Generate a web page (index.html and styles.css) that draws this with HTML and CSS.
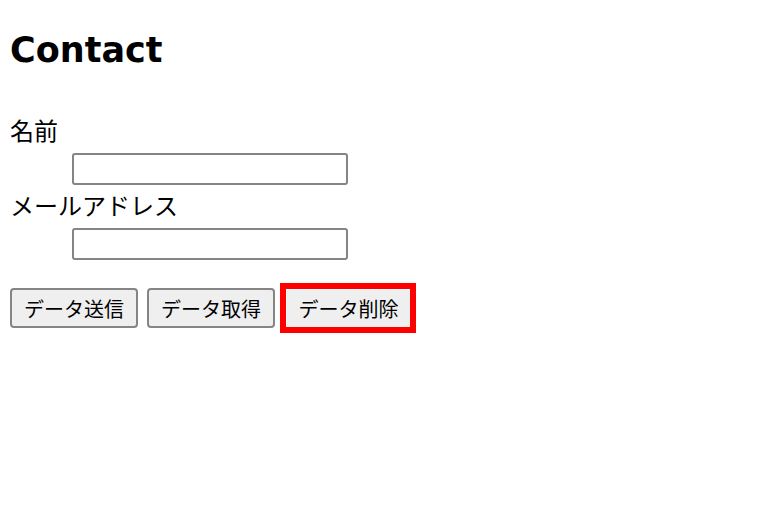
FILE: index.html
```html
<!DOCTYPE html>
<html lang="ja">
<head>
<meta charset="utf-8">
<title>Contact</title>
<link rel="stylesheet" href="styles.css">
</head>
<body>
<h2 class="title">Contact</h2>
<form class="form">
  <dl class="fields">
    <dt class="label">名前</dt>
    <dd class="field"><input class="text-input" type="text"></dd>
    <dt class="label">メールアドレス</dt>
    <dd class="field"><input class="text-input" type="text"></dd>
  </dl>
  <div class="actions">
    <button type="button" class="btn">データ送信</button>
    <button type="button" class="btn">データ取得</button>
    <span class="highlight"><button type="button" class="btn btn-inner">データ削除</button></span>
  </div>
</form>
</body>
</html>
```

FILE: styles.css
```css
html, body {
  background: #fff;
}
body {
  margin: 0;
  padding: 10px;
  font-family: "Noto Sans CJK JP", "Noto Sans", sans-serif;
  font-size: 24px;
  color: #000;
}
.title {
  margin: 20px 0 40px;
  font-family: "DejaVu Sans", "Noto Sans CJK JP", sans-serif;
  font-weight: bold;
  font-size: 35px;
  line-height: 40px;
  height: 40px;
}
.form {
  margin: 0;
}
.fields {
  margin: 0;
  display: flex;
  flex-direction: column;
}
.label {
  height: 40px;
  line-height: 40px;
  margin: 0;
  padding-left: 0;
}
.field {
  margin: 0 0 0 62px;
  height: 35px;
  padding-top: 3px;
  box-sizing: border-box;
}
.text-input {
  display: block;
  box-sizing: border-box;
  width: 276px;
  height: 32px;
  margin: 0;
  border: 2px solid #858585;
  border-radius: 3px;
  background: #fff;
  padding: 0 4px;
}
.actions {
  margin-top: 23px;
  display: flex;
  gap: 9px;
  align-items: center;
}
.btn {
  box-sizing: border-box;
  width: 128px;
  height: 40px;
  margin: 0;
  padding: 0;
  font-family: "Noto Sans CJK JP", sans-serif;
  font-size: 20px;
  color: #000;
  background: #efefef;
  border: 2px solid #858585;
  border-radius: 4px;
}
.highlight {
  display: block;
  margin-left: -4px;
  border: 6px solid #ff0000;
  width: 124px;
  height: 38px;
}
.btn-inner {
  display: block;
  width: 124px;
  height: 38px;
  border: none;
  border-radius: 0;
  border-left: 1px solid #f8f8f8;
  border-top: 1px solid #f8f8f8;
}
```
